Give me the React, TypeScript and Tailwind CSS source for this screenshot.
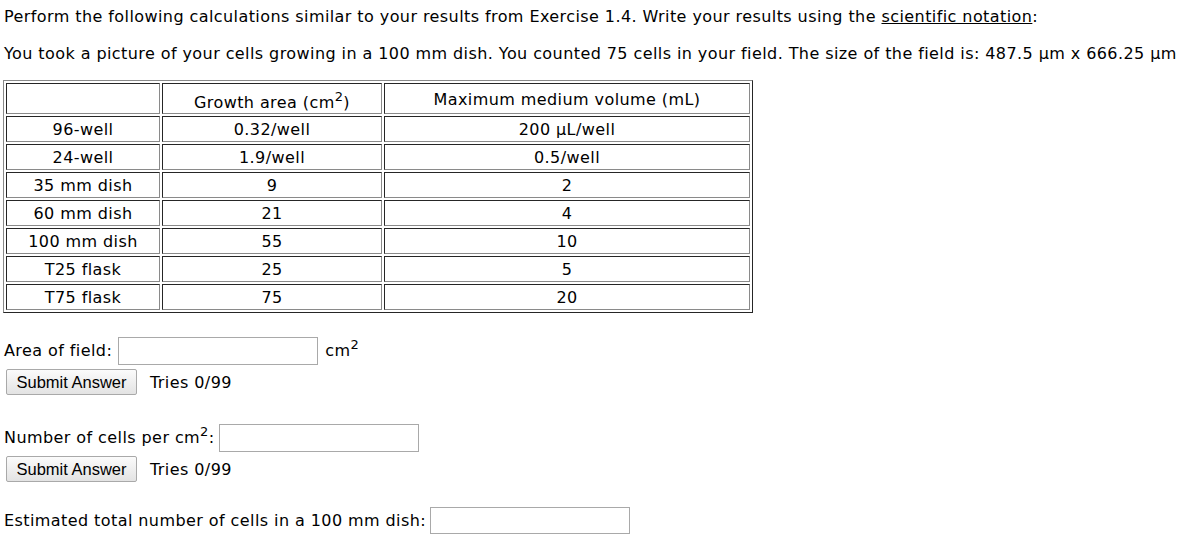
import React from "react";

const rows: [string, string, string][] = [
  ["96-well", "0.32/well", "200 µL/well"],
  ["24-well", "1.9/well", "0.5/well"],
  ["35 mm dish", "9", "2"],
  ["60 mm dish", "21", "4"],
  ["100 mm dish", "55", "10"],
  ["T25 flask", "25", "5"],
  ["T75 flask", "75", "20"],
];

const cell =
  "p-0 border border-t-[#262626] border-l-[#262626] border-b-[#8a8a8a] border-r-[#8a8a8a] text-center align-middle";

function Sup({ children }: { children: React.ReactNode }) {
  return <sup className="text-[13px] relative -top-[7px] align-baseline">{children}</sup>;
}

function SubmitRow({ mt }: { mt: string }) {
  return (
    <div className={`flex items-center h-[26px] ${mt}`}>
      <button
        className="ml-[2px] w-[131px] h-[26px] border border-[#a9a9a9] rounded-[2px] bg-gradient-to-b from-[#fbfbfb] to-[#e3e3e3] text-[16.5px] text-black leading-none tracking-normal"
        style={{ fontFamily: '"Liberation Sans", Arial, sans-serif' }}
      >
        Submit Answer
      </button>
      <span className="ml-[13px] mt-[2px]">Tries 0/99</span>
    </div>
  );
}

export default function App() {
  return (
    <div
      className="w-[1195px] h-[535px] overflow-hidden bg-white text-black pl-[4px] pt-[8px] text-[16px] leading-[18px] tracking-[0.42px]"
      style={{ fontFamily: '"DejaVu Sans", Verdana, sans-serif' }}
    >
      <p>
        Perform the following calculations similar to your results from Exercise 1.4. Write your results using the{" "}
        <span className="underline">scientific notation</span>:
      </p>
      <p className="mt-[19px]">
        You took a picture of your cells growing in a 100 mm dish. You counted 75 cells in your field. The size of the
        field is: 487.5 µm x 666.25 µm
      </p>

      <table className="mt-[17px] -ml-[1px] border-separate border-spacing-[2px] border border-t-[#8a8a8a] border-l-[#8a8a8a] border-b-[#262626] border-r-[#262626]">
        <tbody>
          <tr>
            <td className={`${cell} w-[154px]`}>
              <div className="h-[29px]"></div>
            </td>
            <td className={`${cell} w-[220px]`}>
              <div className="h-[29px] pt-[10px] leading-[18px]">
                Growth area (cm<Sup>2</Sup>)
              </div>
            </td>
            <td className={`${cell} w-[366px]`}>
              <div className="h-[29px] pt-[7px] leading-[18px]">Maximum medium volume (mL)</div>
            </td>
          </tr>
          {rows.map((r) => (
            <tr key={r[0]}>
              {r.map((c, i) => (
                <td key={i} className={cell}>
                  <div className="h-[24px] pt-[4px] leading-[18px]">{c}</div>
                </td>
              ))}
            </tr>
          ))}
        </tbody>
      </table>

      <div className="flex items-center h-[28px] mt-[24px]">
        <span>Area of field:</span>
        <div className="ml-[6px] w-[200px] h-[28px] border border-[#a9a9a9] bg-white"></div>
        <span className="ml-[7px]">
          cm<Sup>2</Sup>
        </span>
      </div>
      <SubmitRow mt="mt-[4px]" />

      <div className="flex items-center h-[28px] mt-[29px]">
        <span>
          Number of cells per cm<Sup>2</Sup>:
        </span>
        <div className="ml-[4px] w-[200px] h-[28px] border border-[#a9a9a9] bg-white"></div>
      </div>
      <SubmitRow mt="mt-[4px]" />

      <div className="flex items-center h-[27px] mt-[25px]">
        <span>Estimated total number of cells in a 100 mm dish:</span>
        <div className="ml-[4px] w-[200px] h-[27px] border border-[#a9a9a9] bg-white"></div>
      </div>
    </div>
  );
}
